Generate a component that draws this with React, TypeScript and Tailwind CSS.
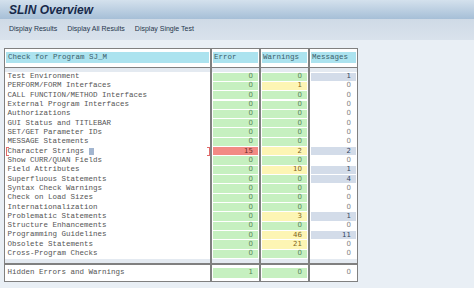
type Tone = 'g' | 'y' | 'r' | 'b' | 'w';

const rows: [string, number, number, number][] = [
    ['Test Environment', 0, 0, 1],
    ['PERFORM/FORM Interfaces', 0, 1, 0],
    ['CALL FUNCTION/METHOD Interfaces', 0, 0, 0],
    ['External Program Interfaces', 0, 0, 0],
    ['Authorizations', 0, 0, 0],
    ['GUI Status and TITLEBAR', 0, 0, 0],
    ['SET/GET Parameter IDs', 0, 0, 0],
    ['MESSAGE Statements', 0, 0, 0],
    ['Character Strings', 15, 2, 2],
    ['Show CURR/QUAN Fields', 0, 0, 0],
    ['Field Attributes', 0, 10, 1],
    ['Superfluous Statements', 0, 0, 4],
    ['Syntax Check Warnings', 0, 0, 0],
    ['Check on Load Sizes', 0, 0, 0],
    ['Internationalization', 0, 0, 0],
    ['Problematic Statements', 0, 3, 1],
    ['Structure Enhancements', 0, 0, 0],
    ['Programming Guidelines', 0, 46, 11],
    ['Obsolete Statements', 0, 21, 0],
    ['Cross-Program Checks', 0, 0, 0],
];

const toneClass: Record<Tone, string> = {
    g: 'bg-[#c6f0c0] text-[#5a875a]',
    y: 'bg-[#fdf5b4] text-[#7d6420]',
    r: 'bg-[#f28a84] text-[#6e2a26]',
    b: 'bg-[#d3dce9] text-[#34465f]',
    w: 'bg-white text-[#858585]',
};

const mono = "font-['Liberation_Mono',monospace] text-[7.5px]";

function NumCell({ value, tone, h }: { value: number; tone: Tone; h: string }) {
    return (
        <div className="w-[49px] border-l-2 border-[#808080] px-[1px] flex items-center">
            <div
                className={`w-full ${h} flex items-center justify-end pr-[5px] font-['DejaVu_Sans',sans-serif] text-[7px] leading-none ${toneClass[tone]}`}
            >
                {value}
            </div>
        </div>
    );
}

function Strip({ h }: { h: string }) {
    return (
        <div className={`flex ${h}`}>
            <div className="w-[205px] bg-[#e4eaf1]" />
            <div className="w-[49px] border-l-2 border-[#808080] bg-[#e4eaf1]" />
            <div className="w-[49px] border-l-2 border-[#808080] bg-[#e4eaf1]" />
            <div className="w-[49px] border-l-2 border-[#808080] bg-[#e4eaf1]" />
        </div>
    );
}

export default function App() {
    return (
        <div className="w-[474px] h-[288px] bg-[#e9eff5] overflow-hidden">
            {/* Title */}
            <div className="h-[19px] bg-gradient-to-b from-[#d4e1ed] to-[#a6bfd7] flex items-center pl-[9px]">
                <h1 className="font-['Liberation_Sans',sans-serif] text-[12px] font-bold italic text-[#17294a] leading-none">
                    SLIN Overview
                </h1>
            </div>
            {/* Toolbar */}
            <div className="h-[21px] bg-gradient-to-b from-[#cfdae6] to-[#d9e2ec] flex items-center gap-[10px] pl-[9px] font-['Liberation_Sans',sans-serif] text-[7px] text-[#26364c]">
                <span>Display Results</span>
                <span>Display All Results</span>
                <span>Display Single Test</span>
            </div>

            <div className="ml-[4px] mt-[8px] w-[354px] border border-[#808080] bg-white">
                {/* Header */}
                <div className={`flex h-[18px] ${mono} text-[#3a5f6c]`}>
                    <div className="w-[205px] pt-[3px] px-[1px]">
                        <div className="h-[11px] bg-[#ace3ef] pl-[2px] flex items-center">
                            Check for Program SJ_M
                        </div>
                    </div>
                    {['Error', 'Warnings', 'Messages'].map((t) => (
                        <div key={t} className="w-[49px] border-l-2 border-[#808080] pt-[3px] px-[1px]">
                            <div className="h-[11px] bg-[#ace3ef] pl-[1px] flex items-center">{t}</div>
                        </div>
                    ))}
                </div>
                <div className="h-px bg-[#808080]" />
                <Strip h="h-[4px]" />

                {rows.map(([label, err, warn, msg]) => {
                    const marked = err > 0;
                    return (
                        <div key={label} className="flex h-[9.33px] relative">
                            <div className={`w-[205px] pl-[2.5px] flex items-center gap-[5px] ${mono} text-[#555] leading-none`}>
                                <span>{label}</span>
                                {marked && <span className="w-[5px] h-[7px] bg-[#a3b6d0]" />}
                            </div>
                            {marked && (
                                <>
                                    <div className="absolute left-[1px] top-[0px] w-[3px] h-[9px] border-l border-t border-b border-[#e06a6a]" />
                                    <div className="absolute left-[202px] top-[0px] w-[3px] h-[9px] border-r border-t border-b border-[#e06a6a]" />
                                </>
                            )}
                            <NumCell value={err} tone={err > 0 ? 'r' : 'g'} h="h-[8.3px]" />
                            <NumCell value={warn} tone={warn > 0 ? 'y' : 'g'} h="h-[8.3px]" />
                            <NumCell value={msg} tone={msg > 0 ? 'b' : 'w'} h="h-[8.3px]" />
                        </div>
                    );
                })}

                <Strip h="h-[4px]" />
                <div className="h-[2px] bg-[#808080]" />
                <div className="flex h-[16px] items-center">
                    <div className={`w-[205px] h-full pl-[2.5px] flex items-center ${mono} text-[#555]`}>
                        Hidden Errors and Warnings
                    </div>
                    <div className="w-[49px] h-full border-l-2 border-[#808080] px-[1px] flex items-center">
                        <div className="w-full h-[10px] flex items-center justify-end pr-[5px] font-['DejaVu_Sans',sans-serif] text-[7px] bg-[#c6f0c0] text-[#5a875a]">1</div>
                    </div>
                    <div className="w-[49px] h-full border-l-2 border-[#808080] px-[1px] flex items-center">
                        <div className="w-full h-[10px] flex items-center justify-end pr-[5px] font-['DejaVu_Sans',sans-serif] text-[7px] bg-[#c6f0c0] text-[#5a875a]">0</div>
                    </div>
                    <div className="w-[49px] h-full border-l-2 border-[#808080] px-[1px] flex items-center">
                        <div className="w-full h-[10px] flex items-center justify-end pr-[5px] font-['DejaVu_Sans',sans-serif] text-[7px] bg-white text-[#858585]">0</div>
                    </div>
                </div>
            </div>
        </div>
    );
}
